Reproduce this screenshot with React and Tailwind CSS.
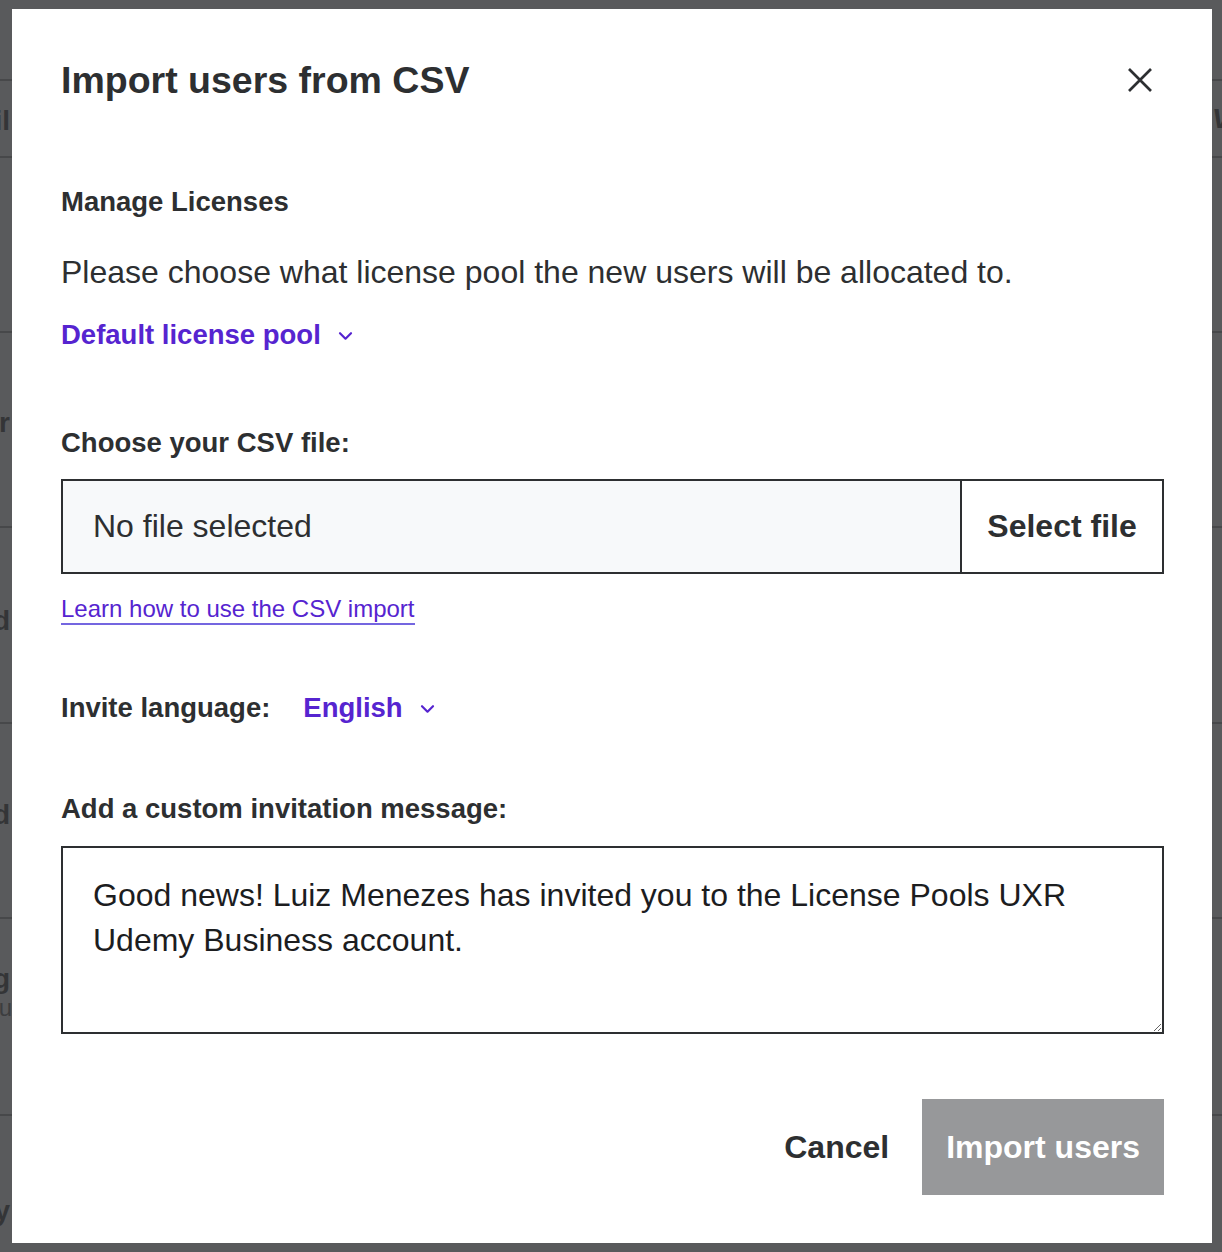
function Frag({ text, className = "" }) {
  return (
    <div className="flex w-[10px] flex-none justify-end">
      <span className={"whitespace-nowrap font-bold text-[#343537] " + className}>{text}</span>
    </div>
  );
}

function Chevron({ className = "" }) {
  return (
    <svg className={className} width="15" height="10" viewBox="0 0 15 10" fill="none">
      <path d="M2 2.2 L7.5 7.7 L13 2.2" stroke="#5624d0" strokeWidth="2.2" strokeLinecap="round" strokeLinejoin="round" />
    </svg>
  );
}

export default function App() {
  return (
    <div className="relative h-[1252px] w-full overflow-hidden bg-[#595a5c] font-['Liberation_Sans',Arial,sans-serif]">
      {/* page behind the overlay */}
      <div className="flex flex-col">
        <div className="h-[81px] border-b-2 border-[#47484a]" />
        <div className="flex h-[77px] items-center justify-between border-b-2 border-[#47484a]">
          <Frag text="Email" className="text-[28px] leading-[33px] pt-[3px]" />
          <div className="flex w-[10px] flex-none justify-start">
            <span className="whitespace-nowrap text-[28px] font-bold italic leading-[33px] text-[#343537]">View</span>
          </div>
        </div>
        <div className="h-[175px] border-b-2 border-[#47484a]" />
        <div className="flex h-[195px] items-center border-b-2 border-[#47484a] pb-[14px]">
          <Frag text="Member" className="text-[28px] leading-[33px]" />
        </div>
        <div className="flex h-[196px] items-center border-b-2 border-[#47484a] pb-[10px]">
          <Frag text="Invited" className="text-[28px] leading-[33px]" />
        </div>
        <div className="flex h-[195px] items-center border-b-2 border-[#47484a] pb-[12px]">
          <Frag text="Pend" className="text-[28px] leading-[33px]" />
        </div>
        <div className="flex h-[197px] flex-col justify-center border-b-2 border-[#47484a] pb-[50px]">
          <Frag text="Liang" className="text-[28px] leading-[33px]" />
          <div className="flex w-[12px] flex-none justify-end">
            <span className="whitespace-nowrap text-[24px] leading-[26px] text-[#3c3d3f]">wang@u</span>
          </div>
        </div>
        <div className="flex h-[136px] items-start pt-[78px]">
          <Frag text="Any" className="text-[28px] leading-[33px]" />
        </div>
      </div>

      {/* modal */}
      <div className="absolute left-[12px] top-[9px] flex h-[1234px] w-[1200px] flex-col bg-white pb-[48px] pl-[49px] pr-[48px] pt-[47px] text-[#2d2f31]">
        <div className="flex h-[48px] items-center justify-between">
          <h2 className="text-[37.5px] font-bold leading-[45px]">Import users from CSV</h2>
          <button className="flex h-[48px] w-[48px] items-center justify-center" aria-label="Close">
            <svg width="48" height="48" viewBox="0 0 48 48" fill="none">
              <path d="M13 13 L35 35 M35 13 L13 35" stroke="#2d2f31" strokeWidth="2.7" />
            </svg>
          </button>
        </div>

        <h3 className="mt-[81px] text-[27.5px] font-bold leading-[33px]">Manage Licenses</h3>
        <p className="mt-[32px] text-[32px] leading-[45px]">
          Please choose what license pool the new users will be allocated to.
        </p>
        <button className="mt-[23px] flex items-center self-start text-[27.5px] font-bold leading-[33px] text-[#5624d0]">
          Default license pool
          <Chevron className="ml-[17px] mt-[2px]" />
        </button>

        <label className="mt-[75px] text-[27.5px] font-bold leading-[33px]">Choose your CSV file:</label>
        <div className="mt-[20px] flex h-[95px] border-2 border-[#2d2f31]">
          <div className="flex flex-1 items-center bg-[#f7f9fa] pl-[30px] text-[32px] leading-[45px]">
            No file selected
          </div>
          <button className="flex w-[202px] flex-none items-center justify-center border-l-2 border-[#2d2f31] bg-white text-[32px] font-bold leading-[45px]">
            Select file
          </button>
        </div>
        <a
          href="#"
          className="mt-[22px] self-start border-b-2 border-[#7466e0] pb-[2px] text-[24px] leading-[25px] text-[#5624d0]"
        >
          Learn how to use the CSV import
        </a>

        <div className="mt-[66px] flex items-center text-[27.5px] font-bold leading-[33px]">
          <span>Invite language:</span>
          <button className="ml-[33px] flex items-center text-[#5624d0]">
            English
            <Chevron className="ml-[17px] mt-[2px]" />
          </button>
        </div>

        <label className="mt-[68px] text-[27.5px] font-bold leading-[33px]">Add a custom invitation message:</label>
        <textarea
          className="mt-[21px] h-[188px] w-full border-2 border-[#2d2f31] bg-white pl-[30px] pr-[30px] pt-[25px] text-[32px] leading-[44.5px] text-[#1c1d1f] outline-none"
          defaultValue="Good news! Luiz Menezes has invited you to the License Pools UXR Udemy Business account."
        />

        <div className="mt-[65px] flex items-center justify-end gap-[33px]">
          <button className="text-[32px] font-bold leading-[45px] text-[#2d2f31]">Cancel</button>
          <button className="flex h-[96px] items-center bg-[#97989a] px-[24px] text-[32px] font-bold leading-[45px] text-white">
            Import users
          </button>
        </div>
      </div>
    </div>
  );
}
